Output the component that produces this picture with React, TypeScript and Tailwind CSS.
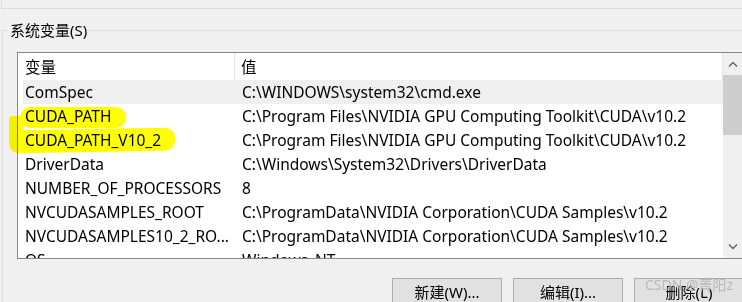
import React from "react";

type Row = {
  name: string;
  value: string;
};

const rows: Row[] = [
  { name: "ComSpec", value: "C:\\WINDOWS\\system32\\cmd.exe" },
  { name: "CUDA_PATH", value: "C:\\Program Files\\NVIDIA GPU Computing Toolkit\\CUDA\\v10.2" },
  { name: "CUDA_PATH_V10_2", value: "C:\\Program Files\\NVIDIA GPU Computing Toolkit\\CUDA\\v10.2" },
  { name: "DriverData", value: "C:\\Windows\\System32\\Drivers\\DriverData" },
  { name: "NUMBER_OF_PROCESSORS", value: "8" },
  { name: "NVCUDASAMPLES_ROOT", value: "C:\\ProgramData\\NVIDIA Corporation\\CUDA Samples\\v10.2" },
  { name: "NVCUDASAMPLES10_2_RO...", value: "C:\\ProgramData\\NVIDIA Corporation\\CUDA Samples\\v10.2" },
  { name: "OS", value: "Windows_NT" },
];

const font = "font-['Noto_Sans','Noto_Sans_CJK_SC',sans-serif]";

function Chevron({ up }: { up?: boolean }) {
  return (
    <svg width="10" height="6" viewBox="0 0 10 6" className="block">
      <polyline
        points={up ? "1,5.5 5,1.5 9,5.5" : "1,0.5 5,4.5 9,0.5"}
        fill="none"
        stroke="#606060"
        strokeWidth="1.3"
      />
    </svg>
  );
}

export default function App() {
  return (
    <div className={`relative w-[742px] h-[302px] overflow-hidden bg-[#f0f0f0] text-black ${font}`}>
      {/* bottom edge of the user variables box above */}
      <div className="ml-[1px] h-[9px] border-l border-b border-[#dcdcdc]" />

      <fieldset className="mt-[11px] ml-[2px] w-[760px] h-[300px] border-l border-t border-[#dcdcdc] m-0 p-0">
        <legend className="ml-[5px] px-[2px] text-[15px] leading-[20px]">系统变量(S)</legend>

        <div className="pl-[14px]">
          {/* list view */}
          <div className="mt-[12px] w-[727px] h-[207px] border border-[#828790] bg-white flex text-[15.5px] leading-[20px]">
            <div className="flex-1 flex flex-col overflow-hidden">
              {/* header */}
              <div className="h-[27px] flex shrink-0 border-r border-[#e5e5e5]">
                <div className="w-[217px] pl-[7px] pt-[4px] border-r border-[#e5e5e5]">变量</div>
                <div className="pl-[6px] pt-[4px]">值</div>
              </div>
              {/* rows */}
              <div className="flex-1 overflow-hidden pl-[5px]">
                {rows.map((r, i) => (
                  <div
                    key={r.name}
                    className={`h-[24px] flex items-center whitespace-nowrap ${i === 0 ? "bg-[#efefef]" : ""}`}
                  >
                    <div className="w-[212px] pl-[2px] overflow-hidden">{r.name}</div>
                    <div className="pl-[7px]">{r.value}</div>
                  </div>
                ))}
              </div>
            </div>

            {/* scrollbar */}
            <div className="w-[20px] bg-[#f0f0f0] flex flex-col items-center shrink-0">
              <div className="h-[22px] flex items-center pr-[1px]">
                <Chevron up />
              </div>
              <div className="w-full h-[60px] bg-[#cdcdcd]" />
              <div className="flex-1" />
              <div className="h-[22px] flex items-center pr-[1px]">
                <Chevron />
              </div>
            </div>
          </div>

          {/* buttons */}
          <div className="mt-[19px] pl-[375px] flex gap-[11px] text-[15px] leading-[20px]">
            <button className="w-[110px] h-[36px] pb-[8px] border border-[#adadad] bg-[#e1e1e1]">新建(W)...</button>
            <button className="w-[110px] h-[36px] pb-[8px] border border-[#adadad] bg-[#e1e1e1]">编辑(I)...</button>
            <button className="w-[110px] h-[36px] pb-[8px] border border-[#adadad] bg-[#e1e1e1]">删除(L)</button>
          </div>
        </div>
      </fieldset>

      {/* highlighter marks */}
      <div className="absolute left-[20px] top-[107px] w-[106px] h-[21px] bg-[#ffff00] rounded-[10px] mix-blend-multiply" />
      <div className="absolute left-[9px] top-[129px] w-[166px] h-[23px] bg-[#ffff00] rounded-[10px] -rotate-1 mix-blend-multiply" />
      <div className="absolute left-[9px] top-[116px] w-[14px] h-[30px] bg-[#ffff00] rounded-[4px] mix-blend-multiply" />

      {/* watermark */}
      <div className="absolute left-[645px] top-[276px] text-[14px] leading-[18px] text-[#b4b4b4] opacity-90 whitespace-nowrap">
        CSDN @菁阳z
      </div>
    </div>
  );
}
